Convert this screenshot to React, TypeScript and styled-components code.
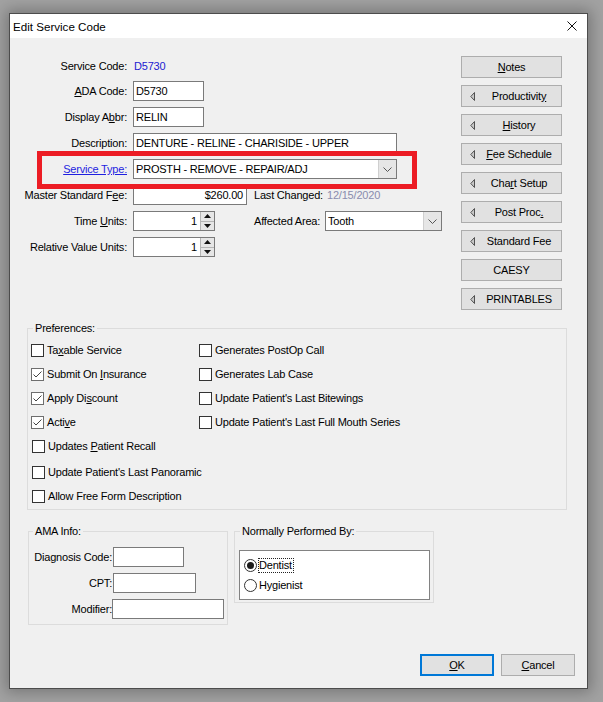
import React from "react";
import styled, { createGlobalStyle } from "styled-components";

const Global = createGlobalStyle`
  html, body { margin: 0; padding: 0; background: #a2a2a2; }
  body {
    font-family: "Liberation Sans", Arial, sans-serif;
    font-size: 11px;
    letter-spacing: -0.2px;
    color: #000;
  }
  * { box-sizing: border-box; }
`;

const Page = styled.div`
  width: 603px;
  height: 702px;
  overflow: hidden;
  padding: 13px 0 0 9px;
  background: #a2a2a2;
`;

const Window = styled.div`
  width: 579px;
  height: 676px;
  border: 1px solid #4c4c4c;
  box-shadow: 0 0 14px 3px rgba(0, 0, 0, 0.28);
  display: flex;
  flex-direction: column;
  background: #f0f0f0;
`;

const TitleBar = styled.div`
  height: 24px;
  flex: none;
  background: #fff;
  display: flex;
  align-items: center;
  justify-content: space-between;
  padding: 0 10px 0 3px;
  font-size: 11.6px;
  letter-spacing: 0;
`;

const Body = styled.div`
  flex: 1;
  display: flex;
  flex-direction: column;
  padding: 18px 0 12px 0;
`;

const TopSection = styled.div`
  display: flex;
  justify-content: space-between;
  align-items: flex-start;
  padding-right: 25px;
`;

const FormGrid = styled.div`
  position: relative;
  display: grid;
  grid-template-columns: 118px 114px auto;
  grid-template-rows: 19px repeat(7, 20px);
  column-gap: 5px;
  row-gap: 6px;
`;

const LabelBox = styled.div`
  grid-column: 1;
  display: flex;
  align-items: center;
  justify-content: flex-end;
  white-space: nowrap;
  padding-right: 1px;
`;

const LinkLabelBox = styled(LabelBox)`
  color: #1f1fe0;
  text-decoration: underline;
`;

const Label = ({ children, link }: { children: React.ReactNode; link?: boolean }) =>
  link ? (
    <LinkLabelBox>
      <span>{children}</span>
    </LinkLabelBox>
  ) : (
    <LabelBox>
      <span>{children}</span>
    </LabelBox>
  );

const ValueText = styled.div`
  grid-column: 2;
  display: flex;
  align-items: center;
  padding-left: 1px;
  color: #2121d0;
`;

const Cell = styled.div<{ $span?: boolean }>`
  grid-column: ${(p) => (p.$span ? "2 / 4" : "2")};
  display: flex;
  align-items: stretch;
`;

const SideCell = styled.div`
  grid-column: 3;
  display: flex;
  align-items: center;
  padding-left: 2px;
  white-space: nowrap;
`;

const SideLabel = styled.span`
  width: 71px;
  flex: none;
`;

const DateText = styled.span`
  color: #8a8cae;
  padding-left: 2px;
`;

const TextBox = styled.div<{ $w: number; $right?: boolean }>`
  width: ${(p) => p.$w}px;
  height: 20px;
  background: #fff;
  border: 1px solid #7a7a7a;
  display: flex;
  align-items: center;
  justify-content: ${(p) => (p.$right ? "flex-end" : "flex-start")};
  padding: 0 3px 0 2px;
  white-space: nowrap;
  overflow: hidden;
  flex: none;
`;

const ComboBox = styled.div<{ $w: number }>`
  width: ${(p) => p.$w}px;
  height: 20px;
  background: #fff;
  border: 1px solid #7a7a7a;
  display: flex;
  align-items: stretch;
  flex: none;
`;

const ComboText = styled.div`
  flex: 1;
  display: flex;
  align-items: center;
  padding-left: 2px;
  white-space: nowrap;
  overflow: hidden;
`;

const ComboButton = styled.div`
  width: 18px;
  flex: none;
  background: #e6e6e6;
  border-left: 1px solid #cfcfcf;
  display: flex;
  align-items: center;
  justify-content: center;
`;

const Spinner = styled.div`
  width: 82px;
  height: 20px;
  background: #fff;
  border: 1px solid #7a7a7a;
  display: flex;
  align-items: stretch;
`;

const SpinText = styled.div`
  flex: 1;
  display: flex;
  align-items: center;
  justify-content: flex-end;
  padding-right: 3px;
`;

const SpinButtons = styled.div`
  width: 14px;
  flex: none;
  display: flex;
  flex-direction: column;
  border-left: 1px solid #b5b5b5;
`;

const SpinHalf = styled.div<{ $top?: boolean }>`
  flex: 1;
  background: #e6e6e6;
  border-bottom: ${(p) => (p.$top ? "1px solid #b5b5b5" : "none")};
  display: flex;
  align-items: center;
  justify-content: center;
`;

const Highlight = styled.div`
  position: absolute;
  left: 27px;
  top: 95px;
  width: 380px;
  height: 38px;
  border: 5px solid #ec1c24;
  pointer-events: none;
`;

const ButtonColumn = styled.div`
  display: flex;
  flex-direction: column;
  gap: 7px;
`;

const SideButton = styled.div<{ $arrow?: boolean }>`
  width: 101px;
  height: 22px;
  background: #e1e1e1;
  border: 1px solid #adadad;
  display: grid;
  grid-template-columns: ${(p) => (p.$arrow ? "15px 1fr" : "1fr")};
  align-items: center;
  white-space: nowrap;
`;

const ArrowCell = styled.div`
  display: flex;
  align-items: center;
  padding-left: 8px;
`;

const ButtonLabel = styled.span`
  text-align: center;
`;

const U = styled.span`
  text-decoration: underline;
`;

const GroupBox = styled.fieldset<{ $w?: number }>`
  margin: 0;
  border: 1px solid #dcdcdc;
  min-width: 0;
  ${(p) => (p.$w ? `width: ${p.$w}px;` : "")}
`;

const Legend = styled.legend<{ $ml: number }>`
  margin-left: ${(p) => p.$ml}px;
  padding: 0 2px;
  line-height: 13px;
  font-size: 11px;
`;

const PrefsBox = styled(GroupBox)`
  margin: 12px 20px 0 17px;
  padding: 3px 0 1px 3px;
`;

const CheckRow = styled.div<{ $indent?: number; $mt?: number }>`
  height: 24px;
  display: grid;
  grid-template-columns: 168px auto;
  align-items: center;
  margin-left: ${(p) => p.$indent || 0}px;
  margin-top: ${(p) => p.$mt || 0}px;
`;

const CheckItem = styled.label`
  display: flex;
  align-items: center;
  gap: 3px;
  white-space: nowrap;
`;

const CheckBoxSquare = styled.span<{ $checked?: boolean }>`
  width: 13px;
  height: 13px;
  flex: none;
  background: #fff;
  border: 1px solid ${(p) => (p.$checked ? "#6e6e6e" : "#333")};
  display: flex;
  align-items: center;
  justify-content: center;
`;

const BottomSection = styled.div`
  display: flex;
  align-items: flex-start;
  gap: 6px;
  padding-left: 18px;
  margin-top: 15px;
`;

const AmaBox = styled(GroupBox)`
  padding: 9px 0 5px 0;
  display: block;
`;

const AmaRows = styled.div`
  display: grid;
  grid-template-columns: 83px auto;
  grid-auto-rows: 20px;
  row-gap: 6px;
  column-gap: 1px;
`;

const AmaLabel = styled.div`
  display: flex;
  align-items: center;
  justify-content: flex-end;
  white-space: nowrap;
`;

const AmaInput = styled.div<{ $w: number; $ml?: number }>`
  width: ${(p) => p.$w}px;
  height: 20px;
  margin-left: ${(p) => p.$ml || 0}px;
  background: #fff;
  border: 1px solid #7a7a7a;
`;

const PerformedBox = styled(GroupBox)`
  padding: 12px 0 2px 4px;
`;

const RadioPanel = styled.div`
  width: 191px;
  height: 50px;
  background: #fff;
  border: 1px solid #828282;
  padding: 4px 0 0 4px;
  display: flex;
  flex-direction: column;
`;

const RadioRow = styled.label`
  height: 20px;
  display: flex;
  align-items: center;
  gap: 2px;
  white-space: nowrap;
`;

const RadioCircle = styled.span<{ $on?: boolean }>`
  width: 13px;
  height: 13px;
  border-radius: 50%;
  border: 1px solid #333;
  background: #fff;
  display: flex;
  align-items: center;
  justify-content: center;
  flex: none;
  &::after {
    content: "";
    width: 7px;
    height: 7px;
    border-radius: 50%;
    background: ${(p) => (p.$on ? "#1a1a1a" : "transparent")};
  }
`;

const FocusText = styled.span<{ $focus?: boolean }>`
  outline: ${(p) => (p.$focus ? "1px dotted #222" : "none")};
  outline-offset: 0;
  padding: 0 1px 0 0;
  line-height: 13px;
`;

const Footer = styled.div`
  margin-top: auto;
  display: flex;
  justify-content: flex-end;
  gap: 7px;
  padding-right: 12px;
`;

const DialogButton = styled.div<{ $default?: boolean }>`
  width: 74px;
  height: 22px;
  background: #e1e1e1;
  border: ${(p) => (p.$default ? "2px solid #0078d7" : "1px solid #adadad")};
  display: flex;
  align-items: center;
  justify-content: center;
`;

const Chevron = () => (
  <svg width="9" height="5" viewBox="0 0 9 5">
    <polyline points="0.5,0.5 4.5,4.5 8.5,0.5" fill="none" stroke="#555" strokeWidth="1" />
  </svg>
);

const SpinArrow = ({ up }: { up?: boolean }) => (
  <svg width="7" height="4" viewBox="0 0 7 4">
    {up ? <polygon points="0,4 7,4 3.5,0" fill="#111" /> : <polygon points="0,0 7,0 3.5,4" fill="#111" />}
  </svg>
);

const ButtonArrow = () => (
  <svg width="5" height="9" viewBox="0 0 5 9">
    <polygon points="4.5,0.5 0.8,4.5 4.5,8.5" fill="#c8c8c8" stroke="#505050" strokeWidth="1" />
  </svg>
);

const CheckMark = () => (
  <svg width="11" height="11" viewBox="0 0 11 11">
    <polyline points="1.5,5.5 4,8 9.5,2.5" fill="none" stroke="#444" strokeWidth="1" />
  </svg>
);

const CloseX = () => (
  <svg width="10" height="10" viewBox="0 0 10 10">
    <line x1="0.5" y1="0.5" x2="9.5" y2="9.5" stroke="#111" strokeWidth="1" />
    <line x1="9.5" y1="0.5" x2="0.5" y2="9.5" stroke="#111" strokeWidth="1" />
  </svg>
);

type Btn = { pre?: string; u?: string; post?: string; arrow?: boolean };
const sideButtons: Btn[] = [
  { pre: "", u: "N", post: "otes" },
  { pre: "Productivit", u: "y", post: "", arrow: true },
  { pre: "", u: "H", post: "istory", arrow: true },
  { pre: "", u: "F", post: "ee Schedule", arrow: true },
  { pre: "Cha", u: "r", post: "t Setup", arrow: true },
  { pre: "Post Proc", u: ".", post: "", arrow: true },
  { pre: "Standard Fee", arrow: true },
  { pre: "CAESY" },
  { pre: "PRINTABLES", arrow: true },
];

const Check = ({ checked, children }: { checked?: boolean; children: React.ReactNode }) => (
  <CheckItem>
    <CheckBoxSquare $checked={checked}>{checked && <CheckMark />}</CheckBoxSquare>
    <span>{children}</span>
  </CheckItem>
);

const SpinBox = ({ value }: { value: string }) => (
  <Spinner>
    <SpinText>{value}</SpinText>
    <SpinButtons>
      <SpinHalf $top>
        <SpinArrow up />
      </SpinHalf>
      <SpinHalf>
        <SpinArrow />
      </SpinHalf>
    </SpinButtons>
  </Spinner>
);

export default function App() {
  return (
    <>
      <Global />
      <Page>
        <Window>
          <TitleBar>
            <span>Edit Service Code</span>
            <CloseX />
          </TitleBar>
          <Body>
            <TopSection>
              <FormGrid>
                <Label>Service Code:</Label>
                <ValueText>D5730</ValueText>

                <Label>
                  <U>A</U>DA Code:
                </Label>
                <Cell>
                  <TextBox $w={71}>D5730</TextBox>
                </Cell>

                <Label>
                  Display A<U>b</U>br:
                </Label>
                <Cell>
                  <TextBox $w={71}>RELIN</TextBox>
                </Cell>

                <Label>Description:</Label>
                <Cell $span>
                  <TextBox $w={264}>DENTURE - RELINE - CHARISIDE - UPPER</TextBox>
                </Cell>

                <Label link>Service Type:</Label>
                <Cell $span>
                  <ComboBox $w={264}>
                    <ComboText>PROSTH - REMOVE - REPAIR/ADJ</ComboText>
                    <ComboButton>
                      <Chevron />
                    </ComboButton>
                  </ComboBox>
                </Cell>

                <Label>
                  Master Standard F<U>e</U>e:
                </Label>
                <Cell>
                  <TextBox $w={114} $right>
                    $260.00
                  </TextBox>
                </Cell>
                <SideCell>
                  <SideLabel>Last Changed:</SideLabel>
                  <DateText>12/15/2020</DateText>
                </SideCell>

                <Label>
                  Time <U>U</U>nits:
                </Label>
                <Cell>
                  <SpinBox value="1" />
                </Cell>
                <SideCell>
                  <SideLabel>Affected Area:</SideLabel>
                  <ComboBox $w={117}>
                    <ComboText>Tooth</ComboText>
                    <ComboButton>
                      <Chevron />
                    </ComboButton>
                  </ComboBox>
                </SideCell>

                <Label>Relative Value Units:</Label>
                <Cell>
                  <SpinBox value="1" />
                </Cell>

                <Highlight />
              </FormGrid>

              <ButtonColumn>
                {sideButtons.map((b, i) => (
                  <SideButton key={i} $arrow={b.arrow}>
                    {b.arrow && (
                      <ArrowCell>
                        <ButtonArrow />
                      </ArrowCell>
                    )}
                    <ButtonLabel>
                      {b.pre}
                      {b.u && <U>{b.u}</U>}
                      {b.post}
                    </ButtonLabel>
                  </SideButton>
                ))}
              </ButtonColumn>
            </TopSection>

            <PrefsBox>
              <Legend $ml={2}>Preferences:</Legend>
              <CheckRow>
                <Check>
                  Ta<U>x</U>able Service
                </Check>
                <Check>Generates PostOp Call</Check>
              </CheckRow>
              <CheckRow>
                <Check checked>
                  Submit On <U>I</U>nsurance
                </Check>
                <Check>Generates Lab Case</Check>
              </CheckRow>
              <CheckRow>
                <Check checked>
                  Apply Di<U>s</U>count
                </Check>
                <Check>Update Patient's Last Bitewings</Check>
              </CheckRow>
              <CheckRow>
                <Check checked>
                  Acti<U>v</U>e
                </Check>
                <Check>Update Patient's Last Full Mouth Series</Check>
              </CheckRow>
              <CheckRow $indent={1}>
                <Check>
                  Updates <U>P</U>atient Recall
                </Check>
              </CheckRow>
              <CheckRow $indent={1} $mt={2}>
                <Check>Update Patient's Last Panoramic</Check>
              </CheckRow>
              <CheckRow $indent={1}>
                <Check>Allow Free Form Description</Check>
              </CheckRow>
            </PrefsBox>

            <BottomSection>
              <AmaBox $w={200}>
                <Legend $ml={4}>AMA Info:</Legend>
                <AmaRows>
                  <AmaLabel>Diagnosis Code:</AmaLabel>
                  <AmaInput $w={71} />
                  <AmaLabel>CPT:</AmaLabel>
                  <AmaInput $w={83} />
                  <AmaLabel>Modifier:</AmaLabel>
                  <AmaInput $w={112} $ml={-1} />
                </AmaRows>
              </AmaBox>

              <PerformedBox $w={200}>
                <Legend $ml={1}>Normally Performed By:</Legend>
                <RadioPanel>
                  <RadioRow>
                    <RadioCircle $on />
                    <FocusText $focus>Dentist</FocusText>
                  </RadioRow>
                  <RadioRow>
                    <RadioCircle />
                    <FocusText>Hygienist</FocusText>
                  </RadioRow>
                </RadioPanel>
              </PerformedBox>
            </BottomSection>

            <Footer>
              <DialogButton $default>
                <span>
                  <U>O</U>K
                </span>
              </DialogButton>
              <DialogButton>
                <span>
                  <U>C</U>ancel
                </span>
              </DialogButton>
            </Footer>
          </Body>
        </Window>
      </Page>
    </>
  );
}
